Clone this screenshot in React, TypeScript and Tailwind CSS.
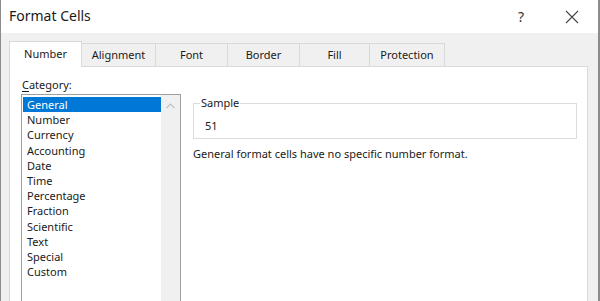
import React from "react";

const tabs = [
  { label: "Number", w: 73 },
  { label: "Alignment", w: 74 },
  { label: "Font", w: 72 },
  { label: "Border", w: 72 },
  { label: "Fill", w: 70 },
  { label: "Protection", w: 75 },
];

const items = [
  "General",
  "Number",
  "Currency",
  "Accounting",
  "Date",
  "Time",
  "Percentage",
  "Fraction",
  "Scientific",
  "Text",
  "Special",
  "Custom",
];

export default function App() {
  return (
    <div
      className="w-[600px] h-[301px] overflow-hidden bg-[#f0f0f0] border-l border-l-[#8c8c8c] border-r-2 border-r-[#8c8c8c] flex flex-col text-[#1a1a1a] text-[11px]"
      style={{ fontFamily: '"Segoe UI", "Noto Sans", sans-serif' }}
    >
      {/* Title bar */}
      <div className="h-[33px] shrink-0 bg-white flex items-center">
        <div className="pl-[8px] text-[14px] flex-1 leading-none pb-[1px]">Format Cells</div>
        <div className="w-[30px] text-center text-[14px] text-[#333] mr-[21px]">?</div>
        <div className="w-[30px] flex justify-center mr-[11px]">
          <svg width="14" height="14" viewBox="0 0 14 14">
            <path d="M1 1 L13 13 M13 1 L1 13" stroke="#444" strokeWidth="1.1" fill="none" />
          </svg>
        </div>
      </div>

      {/* Body */}
      <div className="flex-1 flex flex-col pl-[8px] pr-[10px] pt-[8px] min-h-0">
        {/* Tabs */}
        <div className="flex items-end h-[25px] shrink-0 relative z-10">
          {tabs.map((t, i) =>
            i === 0 ? (
              <div
                key={t.label}
                style={{ width: t.w }}
                className="h-[26px] -mb-px bg-white border border-b-0 border-[#d9d9d9] flex items-center justify-center pb-[1px]"
              >
                {t.label}
              </div>
            ) : (
              <div
                key={t.label}
                style={{ width: t.w }}
                className="h-[23px] bg-[#f0f0f0] border-t border-r border-[#d9d9d9] flex items-center justify-center pt-[1px]"
              >
                {t.label}
              </div>
            )
          )}
        </div>

        {/* Panel */}
        <div className="flex-1 bg-white border border-[#d9d9d9] border-b-0 flex pl-[11px] pr-[10px] pt-[10px] min-h-0">
          {/* Category */}
          <div className="flex flex-col w-[160px] shrink-0">
            <div className="h-[16px] leading-[16px] pl-px">
              <span className="underline underline-offset-2">C</span>ategory:
            </div>
            <div className="mt-[1px] flex-1 border border-[#a0a0a0] border-b-0 flex min-h-0">
              <div className="flex-1 pt-[2px] pl-px">
                {items.map((it, i) => (
                  <div
                    key={it}
                    className={
                      "h-[15.2px] leading-[15px] pl-[4px] " +
                      (i === 0 ? "bg-[#0078d7] text-white" : "")
                    }
                  >
                    {it}
                  </div>
                ))}
              </div>
              <div className="w-[19px] bg-[#f0f0f0] flex justify-center pt-[8px]">
                <svg width="9" height="6" viewBox="0 0 9 6">
                  <path d="M0.5 5 L4.5 1 L8.5 5" stroke="#c0c0c0" strokeWidth="1.2" fill="none" />
                </svg>
              </div>
            </div>
          </div>

          {/* Right side */}
          <div className="flex-1 ml-[12px] pt-[19px] flex flex-col">
            <fieldset className="border border-[#dcdcdc] h-[43px] pl-[6px] pr-[7px]">
              <legend className="px-px leading-[14px]">Sample</legend>
              <div className="pl-[5px] pt-[8px] leading-[16px]">51</div>
            </fieldset>
            <div className="mt-[7px] leading-[16px]">
              General format cells have no specific number format.
            </div>
          </div>
        </div>
      </div>
    </div>
  );
}
